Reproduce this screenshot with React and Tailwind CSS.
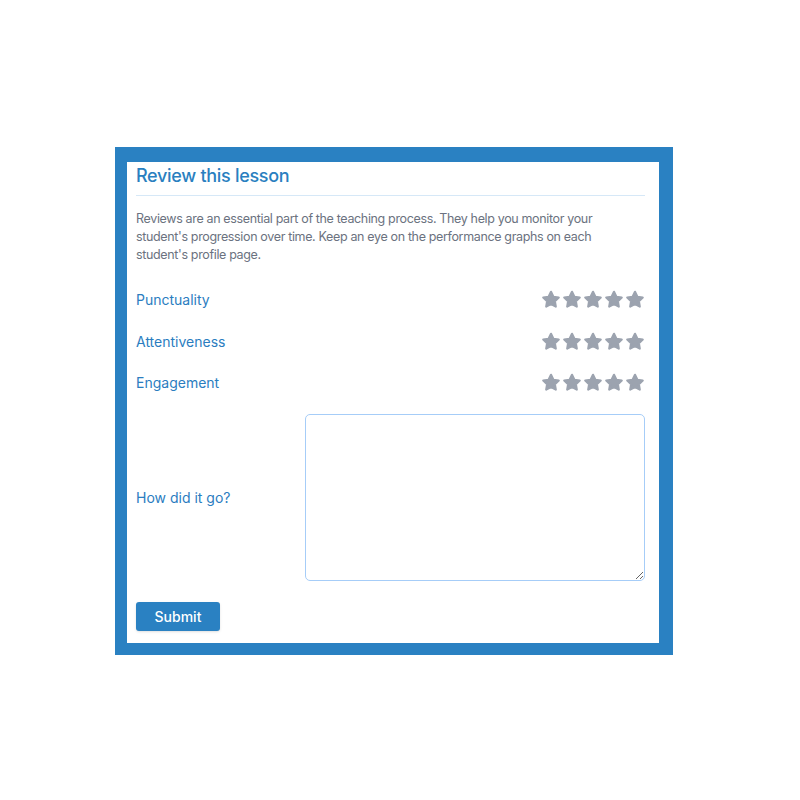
import React from "react";

function Star() {
  return (
    <svg width="20" height="19" viewBox="0 0 24 23" className="block">
      <path
        d="M12 2.2l2.9 5.9 6.5.95-4.7 4.6 1.1 6.45L12 17.05 6.2 20.1l1.1-6.45-4.7-4.6 6.5-.95z"
        fill="#9ca3af"
        stroke="#9ca3af"
        strokeWidth="2.6"
        strokeLinejoin="round"
      />
    </svg>
  );
}

function Stars() {
  return (
    <div className="flex items-center gap-[1px]">
      <Star />
      <Star />
      <Star />
      <Star />
      <Star />
    </div>
  );
}

function Row({ label }) {
  return (
    <div className="flex h-[41.5px] items-center justify-between">
      <span className="text-[14px] text-[#2b7dbf]">{label}</span>
      <Stars />
    </div>
  );
}

export default function App() {
  return (
    <div
      className="w-[800px] h-[800px] bg-white pt-[147px] pl-[115px]"
      style={{ fontFamily: "Inter, 'Noto Sans', sans-serif" }}
    >
      <div className="w-[558px] h-[508px] bg-[#2a81c2] pt-[15px] pl-[12px] pr-[14px] pb-[12px]">
        <div className="h-full w-full bg-white pl-[9px] pr-[14px] pt-[2px]">
          <h1 className="text-[18px] leading-[24px] font-medium text-[#2a7fc0] tracking-[-0.3px]">
            Review this lesson
          </h1>
          <div className="mt-[7px] h-[1px] bg-[#d6e8f7]" />
          <p className="mt-[14px] text-[12.5px] leading-[18px] text-[#6b7280] tracking-[-0.35px]">
            Reviews are an essential part of the teaching process. They help you monitor your
            student's progression over time. Keep an eye on the performance graphs on each
            student's profile page.
          </p>
          <div className="mt-[15px]">
            <Row label="Punctuality" />
            <Row label="Attentiveness" />
            <Row label="Engagement" />
          </div>
          <div className="mt-[10px] grid grid-cols-[169px_1fr] items-center">
            <span className="text-[14px] text-[#2b7dbf]">How did it go?</span>
            <textarea className="h-[167px] w-full resize-y rounded-[5px] border border-[#a6cdf8] outline-none p-2 text-[13px]" />
          </div>
          <button className="mt-[21px] h-[29px] w-[84px] rounded-[3px] bg-[#2a81c2] text-[14px] font-medium text-white shadow-sm">
            Submit
          </button>
        </div>
      </div>
    </div>
  );
}
